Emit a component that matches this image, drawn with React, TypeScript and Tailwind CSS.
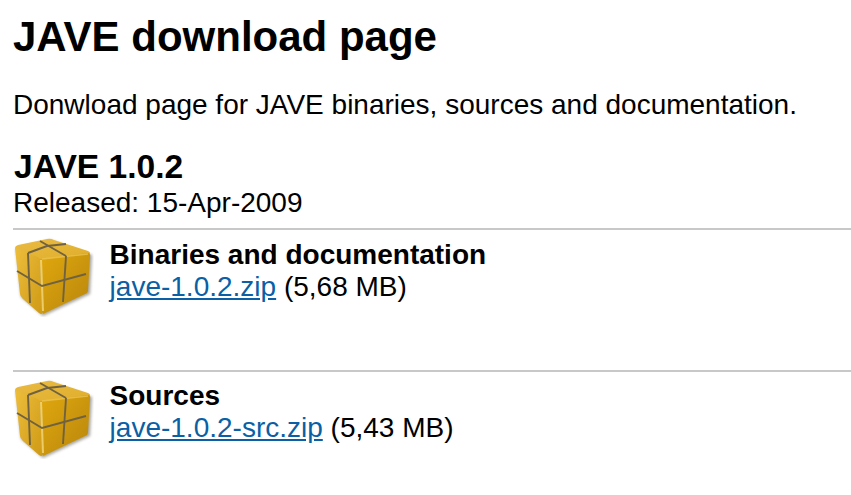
// svg origin sits at page (14,238), the path numbers are read off the reference
function BoxIcon({ id }: { id: string }) {
  return (
    <svg width="80" height="80" viewBox="0 0 80 80" className="ml-px shrink-0">
      <defs>
        <linearGradient id={`${id}-top`} x1="0" y1="0" x2="1" y2="1">
          <stop offset="0" stopColor="#eabb42" />
          <stop offset="1" stopColor="#dfae2c" />
        </linearGradient>
        <linearGradient id={`${id}-left`} x1="0" y1="0" x2="1" y2="1">
          <stop offset="0" stopColor="#edbe3c" />
          <stop offset="1" stopColor="#cf9a16" />
        </linearGradient>
        <linearGradient id={`${id}-right`} x1="0" y1="0" x2="1" y2="1">
          <stop offset="0" stopColor="#e0a812" />
          <stop offset="1" stopColor="#b8860c" />
        </linearGradient>
        <filter id={`${id}-soft`} x="-20%" y="-20%" width="140%" height="140%">
          <feGaussianBlur stdDeviation="0.6" />
        </filter>
        <filter id={`${id}-shadow`} x="-20%" y="-20%" width="140%" height="140%">
          <feGaussianBlur stdDeviation="1.6" />
        </filter>
      </defs>
      <path d="M2 12 L36 3 L78 18 L76 57 L29 79 L7 60 Z" fill="#5e5a50" opacity="0.55" filter={`url(#${id}-shadow)`} />
      <g filter={`url(#${id}-soft)`}>
        <path d="M1 11 Q1 9 4 8 L33 2 Q36 1 40 3 L74 14 Q78 16 74 18 L30 22 Q26 23 23 21 L3 14 Q1 13 1 11 Z" fill={`url(#${id}-top)`} />
        <path d="M1 11 L24 20 Q26 21 26 24 L28 76 Q28 78 25 76 L9 62 Q6 59 6 57 Z" fill={`url(#${id}-left)`} />
        <path d="M26 22 L74 16 Q77 16 76 20 L74 53 Q74 56 71 57 L31 76 Q28 78 28 74 Z" fill={`url(#${id}-right)`} />
        <path d="M27 23 L29 74" stroke="#f6dc84" strokeWidth="2" fill="none" opacity="0.75" />
        <path d="M28 22 L74 17" stroke="#f0c858" strokeWidth="1.5" fill="none" opacity="0.7" />
        <g fill="none" stroke="#6f6240" strokeWidth="1.9">
          <path d="M14 16 L33 9 L52 7" />
          <path d="M26 4 L52 19" />
          <path d="M14 16 L16 66" />
          <path d="M52 19 L49 65" />
          <path d="M3 34 L28 49 L72 37" />
        </g>
      </g>
    </svg>
  );
}

function DownloadRow({ title, file, size }: { title: string; file: string; size: string }) {
  return (
    <div className="flex h-[141.6px] gap-[15.6px] border-t-2 border-[#c8c8c8] pt-[7px]">
      <BoxIcon id={file.includes("src") ? "src" : "bin"} />
      <div className="text-[28px] leading-[33px]">
        <h3 className="text-[28px] font-bold leading-[33px] mt-[0.7px]">{title}</h3>
        <p className="mt-[-1px]">
          <a href="#" className="text-[#0a5fa5] underline">{file}</a> ({size})
        </p>
      </div>
    </div>
  );
}

export default function App() {
  return (
    <div className="h-[495px] overflow-hidden bg-white pl-[13px] font-['Liberation_Sans',Arial,sans-serif] text-black">
      <h1 className="pt-[13px] text-[42px] font-bold leading-[48px]">JAVE download page</h1>
      <p className="mt-[28px] text-[28px] leading-[32px]">
        Donwload page for JAVE binaries, sources and documentation.
      </p>
      <h2 className="ml-px mt-[28px] text-[33.6px] font-bold leading-[36px]">JAVE 1.0.2</h2>
      <p className="text-[28px] leading-[34px] mt-px">Released: 15-Apr-2009</p>
      <div className="mt-[8px]">
        <DownloadRow title="Binaries and documentation" file="jave-1.0.2.zip" size="5,68 MB" />
        <DownloadRow title="Sources" file="jave-1.0.2-src.zip" size="5,43 MB" />
      </div>
    </div>
  );
}
